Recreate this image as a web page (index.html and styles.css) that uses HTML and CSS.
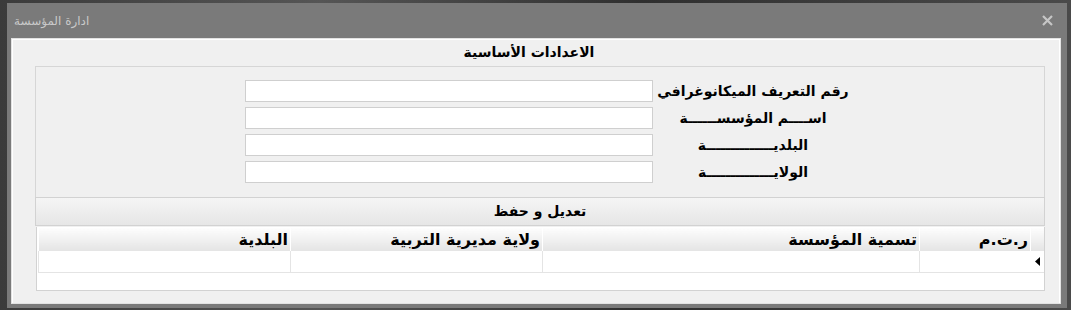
FILE: index.html
```html
<!DOCTYPE html>
<html lang="ar" dir="rtl">
<head>
    <meta charset="UTF-8">
    <title>ادارة المؤسسة</title>
    <link rel="stylesheet" href="styles.css">
</head>
<body>

    <!-- نافذة ادارة المؤسسة -->
    <div class="window">
        <div class="title-bar">
            <span class="title">ادارة المؤسسة</span>
            <svg class="close" width="11" height="11" viewBox="0 0 11 11">
                <path d="M1 1 L10 10 M10 1 L1 10" stroke="#c6c6c6" stroke-width="2.2" fill="none"/>
            </svg>
        </div>

        <div class="client">
            <div class="section-title">الاعدادات الأساسية</div>

            <div class="settings-panel">
                <div class="form-row">
                    <label class="field-label">رقم التعريف الميكانوغرافي</label>
                    <input type="text" class="field-input">
                </div>
                <div class="form-row">
                    <label class="field-label">اســــم المؤسســــــة</label>
                    <input type="text" class="field-input">
                </div>
                <div class="form-row row-gap">
                    <label class="field-label">البلديــــــــــــــة</label>
                    <input type="text" class="field-input">
                </div>
                <div class="form-row">
                    <label class="field-label">الولايــــــــــــــة</label>
                    <input type="text" class="field-input">
                </div>
            </div>

            <div class="save-bar">تعديل و حفظ</div>

            <div class="grid-box">
                <table class="grid">
                    <thead>
                        <tr>
                            <th class="row-head"></th>
                            <th class="col-num">ر.ت.م</th>
                            <th class="col-name">تسمية المؤسسة</th>
                            <th class="col-wilaya">ولاية مديرية التربية</th>
                            <th class="col-commune">البلدية</th>
                        </tr>
                    </thead>
                    <tbody>
                        <tr>
                            <td class="row-head">
                                <svg width="5" height="9" viewBox="0 0 5 9"><polygon points="5,0 5,9 0,4.5" fill="#000"/></svg>
                            </td>
                            <td></td>
                            <td></td>
                            <td></td>
                            <td></td>
                        </tr>
                    </tbody>
                </table>
            </div>
        </div>
    </div>

</body>
</html>
```

FILE: styles.css
```css
body {
    margin: 0;
    width: 1071px;
    height: 310px;
    overflow: hidden;
    direction: ltr;
    font-family: 'DejaVu Sans', sans-serif;
    background: linear-gradient(90deg, #3b3b3b, #555 30%, #2f2f2f 60%, #4a4a4a);
}

/* اطار النافذة */
.window {
    width: 1060px;
    height: 305px;
    margin: 3px 4px 0 7px;
    background: #7a7a7a;
    display: flex;
    flex-direction: column;
    box-sizing: border-box;
    padding: 0 6px 4px 4px;
}

.title-bar {
    height: 35px;
    flex-shrink: 0;
    display: flex;
    align-items: center;
    justify-content: space-between;
    padding: 0 8px 0 3px;
}

.title {
    color: #c9c9c9;
    font-size: 12px;
}

.close {
    display: block;
}

.client {
    direction: rtl;
    flex: 1;
    background: #f0f0f0;
    border: 1px solid #e2e2e2;
    box-shadow: inset -1px 1px 0 #fff, inset 1px 0 0 #fff;
    padding: 0 15px 0 23px;
    display: flex;
    flex-direction: column;
}

.section-title {
    height: 27px;
    line-height: 27px;
    padding-right: 22px;
    text-align: center;
    font-weight: bold;
    font-size: 14px;
    color: #000;
}

/* مجموعة الحقول */
.settings-panel {
    height: 131px;
    box-sizing: border-box;
    border: 1px solid #d6d6d6;
    border-bottom: none;
    padding: 13px 193px 0 0;
}

.form-row {
    display: flex;
    align-items: center;
    height: 22px;
    margin-bottom: 5px;
}

.row-gap {
    margin-top: 2px;
}

.field-label {
    width: 196px;
    text-align: center;
    font-weight: bold;
    font-size: 14px;
    color: #000;
    margin-left: 2px;
}

.field-input {
    width: 408px;
    height: 22px;
    box-sizing: border-box;
    border: 1px solid #cfcfcf;
    background: #fff;
    margin: 0;
}

/* زر الحفظ */
.save-bar {
    height: 29px;
    box-sizing: border-box;
    border: 1px solid #d2d2d2;
    background: linear-gradient(#f5f5f5, #e6e6e6);
    text-align: center;
    line-height: 27px;
    font-weight: bold;
    font-size: 14px;
    color: #000;
}

/* الجدول */
.grid-box {
    height: 64px;
    box-sizing: border-box;
    margin: 1px 0 0 1px;
    background: #fff;
    border: 1px solid #d2d2d2;
    border-top: none;
    padding-top: 1px;
}

.grid {
    border-collapse: collapse;
    table-layout: fixed;
}

.grid th {
    height: 23px;
    padding: 0 2px;
    text-align: right;
    font-weight: bold;
    font-size: 16px;
    color: #000;
    background: linear-gradient(#fdfdfd, #f2f2f2 45%, #e4e4e4);
    border-left: 1px solid #fff;
    white-space: nowrap;
}

.grid td {
    height: 21px;
    padding: 0;
    border-left: 1px solid #e4e4e4;
    border-bottom: 1px solid #e4e4e4;
}

.grid .row-head {
    width: 13px;
    padding: 0;
}

.grid td.row-head {
    background: #fff;
    border-left: none;
}

.grid td.row-head svg {
    display: block;
    margin-right: 4px;
}

.col-num {
    width: 106px;
}

.col-name {
    width: 372px;
}

.col-wilaya {
    width: 247px;
}

.col-commune {
    width: 247px;
}
```
